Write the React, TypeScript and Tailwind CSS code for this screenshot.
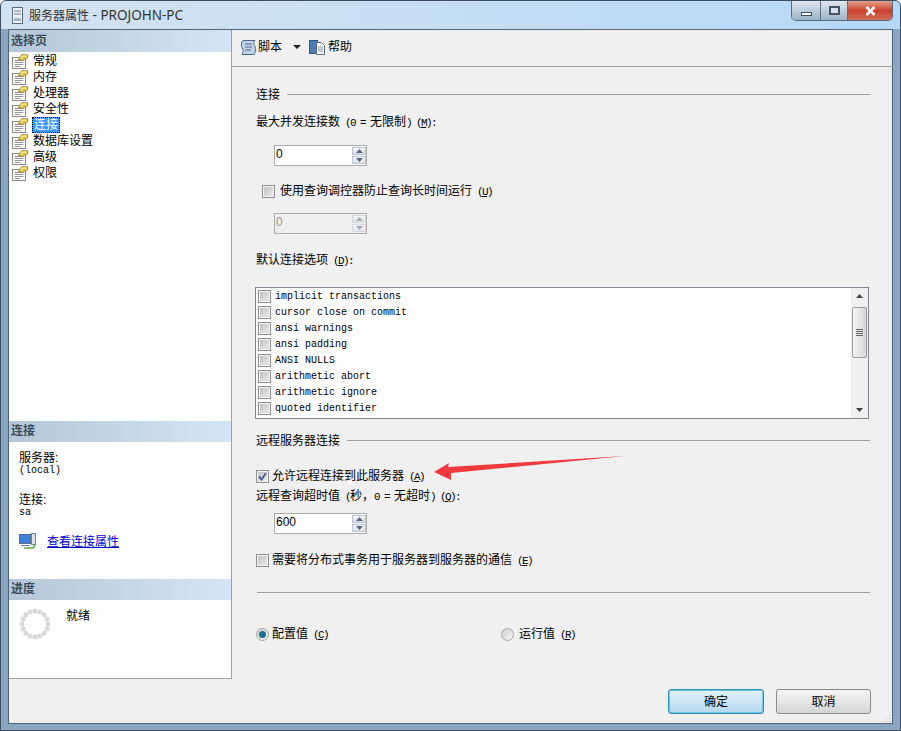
import type { ReactNode } from "react";

const cjk = "font-['Liberation_Sans','Noto_Sans_CJK_SC',sans-serif]";

// half-width latin inside the chinese labels
function L({ children }: { children: ReactNode }) {
  return <span className="whitespace-pre font-['Liberation_Mono',monospace] text-[11px] tracking-[-1.6px]">{children}</span>;
}

function PageIcon() {
  return (
    <svg width="17" height="16" viewBox="0 0 17 16" className="shrink-0">
      <rect x="0.5" y="4.5" width="13" height="11" fill="#fff" stroke="#8a8a8a" />
      <path d="M2.5 7.5h9M2.5 9.5h9M2.5 11.500h9M2.500 13.500h6" stroke="#9a9a9a" />
      <path d="M6 6 10 1.500 16 2 15.500 5 11 7.500Z" fill="#e8cb4e" stroke="#8f7a2a" strokeWidth="0.8" />
      <path d="M8 5 11 3 15 3.200" stroke="#fbf0b0" fill="none" />
    </svg>
  );
}

function SectionHead({ children }: { children: ReactNode }) {
  return (
    <div className="flex h-[21px] items-center bg-gradient-to-r from-[#b4c6d8] to-[#d6e5f3] pb-[2px] pl-[2px] text-[12px] font-bold text-[#3d4b58]">
      {children}
    </div>
  );
}

function Check({ checked }: { checked?: boolean }) {
  return (
    <span className="flex h-[13px] w-[13px] shrink-0 items-center justify-center border border-[#8e8f8f] bg-gradient-to-br from-[#bcbcbc] to-[#efefef] shadow-[inset_0_0_0_1px_#f4f4f4]">
      {checked && (
        <svg width="9" height="9" viewBox="0 0 9 9">
          <path d="M1 4.500 3.500 7.500 8 1" fill="none" stroke="#4a5f97" strokeWidth="2" />
        </svg>
      )}
    </span>
  );
}

function Spinner({ value, disabled }: { value: string; disabled?: boolean }) {
  return (
    <div
      className={`ml-[18px] flex h-[21px] w-[93px] items-center border border-[#ababab] pl-[1px] text-[12px] ${
        disabled ? "bg-[#efefef] text-[#9a9a9a]" : "bg-white text-black"
      }`}
    >
      <span className="mt-[-4px] flex-1">{value}</span>
      <span className={`flex h-[17px] w-[14px] flex-col gap-[1px] ${disabled ? "opacity-50" : ""}`}>
        <span className="flex flex-1 items-center justify-center border border-[#b8c4d0] bg-gradient-to-b from-[#f6f6f6] to-[#d8dee6]">
          <svg width="7" height="4" viewBox="0 0 7 4"><path d="M3.500 0 7 4H0Z" fill="#56697f" /></svg>
        </span>
        <span className="flex flex-1 items-center justify-center border border-[#b8c4d0] bg-gradient-to-b from-[#f6f6f6] to-[#d8dee6]">
          <svg width="7" height="4" viewBox="0 0 7 4"><path d="M0 0H7L3.500 4Z" fill="#56697f" /></svg>
        </span>
      </span>
    </div>
  );
}

function Group({ title, className }: { title: string; className: string }) {
  return (
    <div className={`flex h-4 items-center gap-[7px] text-[12px] ${className}`}>
      <span className="translate-y-px">{title}</span>
      <div className="h-px flex-1 bg-[#a0a0a0]" />
    </div>
  );
}

function Radio({ checked }: { checked?: boolean }) {
  return (
    <span className="flex h-[13px] w-[13px] shrink-0 items-center justify-center rounded-full border border-[#a5a5a5] bg-gradient-to-br from-[#d0d0d0] to-[#f4f4f4]">
      {checked && <span className="h-[7px] w-[7px] rounded-full bg-[#1a6e94]" />}
    </span>
  );
}

const pages = ["常规", "内存", "处理器", "安全性", "连接", "数据库设置", "高级", "权限"];
const options = [
  "implicit transactions",
  "cursor close on commit",
  "ansi warnings",
  "ansi padding",
  "ANSI NULLS",
  "arithmetic abort",
  "arithmetic ignore",
  "quoted identifier",
];

const dots = Array.from({ length: 16 }, (_, i) => (i * Math.PI) / 8);

export default function App() {
  return (
    <div className={`relative flex h-[731px] w-[901px] flex-col overflow-hidden rounded-t-[6px] border border-[#3d4e60] bg-[#8aa7c2] ${cjk} text-black`}>
      {/* title bar */}
      <div className="flex h-[28px] items-start bg-gradient-to-r from-[#d3e2f0] via-[#c6def3] to-[#b4d8f7]">
        <svg width="14" height="18" viewBox="0 0 14 18" className="ml-[10px] mt-[6px]">
          <rect x="1.500" y="0.500" width="10" height="16" fill="#eef2f6" stroke="#5c6c7c" />
          <path d="M3 4h7M3 7h7" stroke="#6d7f90" />
          <rect x="3" y="11" width="7" height="3" fill="#a9b7c4" />
        </svg>
        <span className="ml-[4px] mt-[6px] font-['Noto_Sans','Noto_Sans_CJK_SC',sans-serif] text-[12px] leading-4 text-[#333]">
          服务器属性<span className="text-[13.5px]"> - PROJOHN-PC</span>
        </span>
        <div className="ml-auto mr-[7px] flex h-[20px] w-[102px] overflow-hidden rounded-b-[5px] border border-t-0 border-[#5d6c7c]">
          <div className="flex w-[28px] items-end justify-center bg-gradient-to-b from-[#dfe8f1] to-[#9db1c5] pb-[4px]">
            <span className="h-[4px] w-[11px] border border-[#3f4e5e] bg-white" />
          </div>
          <div className="flex w-[27px] items-center justify-center border-l border-[#5d6c7c] bg-gradient-to-b from-[#dfe8f1] to-[#9db1c5]">
            <span className="h-[9px] w-[11px] border-2 border-[#44525f] bg-[#d6e0ea]" />
          </div>
          <div className="flex flex-1 items-center justify-center border-l border-[#5d6c7c] bg-gradient-to-b from-[#e2a08e] via-[#c8402c] to-[#cf6e5a]">
            <svg width="11" height="10" viewBox="0 0 11 10">
              <path d="M1.500 1 9.500 9M9.500 1 1.500 9" stroke="#fff" strokeWidth="2.600" />
            </svg>
          </div>
        </div>
      </div>

      {/* dialog body */}
      <div className="relative mx-[7px] flex h-[695px] flex-col border border-[#4f6478] bg-[#f0f0f0]">
        <div className="flex h-[649px]">
          {/* left panel */}
          <div className="flex w-[223px] shrink-0 flex-col border-r border-b border-[#a0a0a0] bg-white">
            <div className="h-[391px]">
              <div className="mb-px flex h-[22px] items-center bg-gradient-to-r from-[#b4c6d8] to-[#d6e5f3] pl-[2px] text-[12px] font-bold text-[#3d4b58]">
                选择页
              </div>
              {pages.map((p) => (
                <div key={p} className="flex h-4 items-center pl-[3px] text-[12px]">
                  <PageIcon />
                  {p === "连接" ? (
                    <span className="ml-[3px] border border-dotted border-black bg-[#3399ff] px-px leading-[14px] text-white">{p}</span>
                  ) : (
                    <span className="ml-[4px]">{p}</span>
                  )}
                </div>
              ))}
            </div>
            <div className="h-[158px]">
              <SectionHead>连接</SectionHead>
              <div className="pl-[10px] pt-[8px] text-[12px] leading-3">
                <div className="h-[15px] leading-4">服务器:</div>
                <div className="h-3 font-['Liberation_Mono',monospace] text-[10px]">(local)</div>
                <div className="mt-[15px] h-[15px] leading-4">连接:</div>
                <div className="h-3 font-['Liberation_Mono',monospace] text-[10px]">sa</div>
                <div className="mt-[14px] flex items-center">
                  <svg width="18" height="17" viewBox="0 0 18 17">
                    <rect x="0.500" y="1.500" width="11" height="9" fill="#3f7fe0" stroke="#56708c" />
                    <rect x="12.500" y="0.500" width="4" height="11" fill="#dfe4ea" stroke="#75838f" />
                    <path d="M2 12.500h9" stroke="#75838f" />
                    <path d="M5 15h9l2-3" fill="none" stroke="#5aa84a" strokeWidth="1.500" />
                  </svg>
                  <span className="ml-[10px] leading-4 text-[#0000cc] underline">查看连接属性</span>
                </div>
              </div>
            </div>
            <div className="flex-1">
              <SectionHead>进度</SectionHead>
              <div className="flex items-start pl-[10px] pt-[7px]">
                <svg width="32" height="32" viewBox="-16 -16 32 32" className="mt-[1px]">
                  {dots.map((a) => (
                    <circle key={a} cx={13 * Math.cos(a)} cy={13 * Math.sin(a)} r="2.500" fill="#d9d9d9" />
                  ))}
                </svg>
                <span className="ml-[15px] mt-[1px] text-[12px] leading-4">就绪</span>
              </div>
            </div>
          </div>

          {/* right panel */}
          <div className="flex flex-1 flex-col">
            <div className="flex h-[37px] items-center border-b border-[#a0a0a0] pb-[2px] pl-[8px] text-[12px]">
              <svg width="17" height="17" viewBox="0 0 17 17">
                <path d="M3 1.500h12c-2 2-1 4 0 6s1 5-1 8H2c2-3 1-5 0-7S1 3.500 3 1.500Z" fill="#c3d3e6" stroke="#45688f" />
                <path d="M5 5h7M5 8h7M5 11h6" stroke="#45688f" />
              </svg>
              <span className="ml-[1px]">脚本</span>
              <svg width="8" height="4" viewBox="0 0 8 4" className="ml-[11px]"><path d="M0 0H8L4 4Z" fill="#222" /></svg>
              <svg width="17" height="17" viewBox="0 0 17 17" className="ml-[8px]">
                <rect x="0.500" y="1.500" width="8" height="13" fill="#4d7cb4" stroke="#2f5583" />
                <path d="M7.500 3.500h5l3 3v9h-8Z" fill="#fff" stroke="#596b7d" />
                <path d="M9 8h5M9 10h5M9 12h5" stroke="#8795a3" />
              </svg>
              <span className="ml-[2px]">帮助</span>
            </div>

            <div className="flex flex-col pl-[24px] pr-[23px] text-[12px]">
              <Group title="连接" className="mt-[19px]" />
              <div className="mt-[12px] h-4 leading-4">最大并发连接数<L> (0 = </L>无限制<L>) (<u>M</u>):</L></div>
              <div className="mt-[15px]"><Spinner value="0" /></div>
              <div className="ml-[6px] mt-[17px] flex h-4 items-center gap-[5px] leading-4">
                <Check />
                <span>使用查询调控器防止查询长时间运行<L> (<u>U</u>)</L></span>
              </div>
              <div className="mt-[14px]"><Spinner value="0" disabled /></div>
              <div className="mt-[18px] h-4 leading-4">默认连接选项<L> (<u>D</u>):</L></div>

              <div className="mt-[19px] flex h-[132px] w-[614px] -translate-x-px border border-[#828790] bg-white">
                <div className="flex-1">
                  {options.map((o) => (
                    <div key={o} className="flex h-4 items-center pl-[2px]">
                      <Check />
                      <span className="ml-[4px] font-['Liberation_Mono',monospace] text-[10px]">{o}</span>
                    </div>
                  ))}
                </div>
                <div className="flex w-[17px] flex-col items-center bg-[#f0f0f0]">
                  <svg width="7" height="4" viewBox="0 0 7 4" className="mt-[6px]"><path d="M3.500 0 7 4H0Z" fill="#444" /></svg>
                  <div className="mt-[9px] flex h-[51px] w-[15px] flex-col items-center justify-center gap-px rounded-[2px] border border-[#9b9b9b] bg-gradient-to-r from-[#f4f4f4] to-[#d6d6d6]">
                    <span className="h-px w-[7px] bg-[#666]" />
                    <span className="h-px w-[7px] bg-[#666]" />
                    <span className="h-px w-[7px] bg-[#666]" />
                    <span className="h-px w-[7px] bg-[#666]" />
                  </div>
                  <svg width="7" height="4" viewBox="0 0 7 4" className="mb-[6px] mt-auto"><path d="M0 0H7L3.500 4Z" fill="#444" /></svg>
                </div>
              </div>

              <Group title="远程服务器连接" className="mt-[13px]" />
              <div className="mt-[20px] flex h-4 items-center gap-[3px] leading-4">
                <Check checked />
                <span>允许远程连接到此服务器<L> (<u>A</u>)</L></span>
              </div>
              <div className="mt-[4px] h-4 leading-4">远程查询超时值<L> (</L>秒，<L>0 = </L>无超时<L>) (<u>Q</u>):</L></div>
              <div className="mt-[9px]"><Spinner value="600" /></div>
              <div className="mt-[18px] flex h-4 items-center gap-[3px] leading-4">
                <Check />
                <span>需要将分布式事务用于服务器到服务器的通信<L> (<u>E</u>)</L></span>
              </div>
              <div className="ml-px mt-[24px] h-px bg-[#a0a0a0]" />
              <div className="mt-[33px] flex h-4 items-center leading-4">
                <Radio checked />
                <span className="ml-[3px] w-[229px]">配置值<L> (<u>C</u>)</L></span>
                <Radio />
                <span className="ml-[5px]">运行值<L> (<u>R</u>)</L></span>
              </div>
            </div>
          </div>
        </div>

        {/* footer */}
        <div className="flex flex-1 items-start justify-end gap-[12px] pr-[21px] pt-[10px] text-[12px]">
          <button className="h-[25px] w-[96px] rounded-[3px] border border-[#2c8fb8] bg-gradient-to-b from-[#e3f2fb] to-[#b4d9ee] shadow-[inset_0_0_0_1px_#6cc4e4]">确定</button>
          <button className="h-[25px] w-[95px] rounded-[3px] border border-[#8a8a8a] bg-gradient-to-b from-[#f6f6f6] to-[#d4d4d4]">取消</button>
        </div>

        {/* resize grip */}
        <svg width="8" height="8" viewBox="0 0 8 8" className="absolute bottom-[1px] right-[1px]">
          <path d="M6 1h1v1H6ZM3 4h1v1H3ZM6 4h1v1H6ZM0 7h1v1H0ZM3 7h1v1H3ZM6 7h1v1H6Z" fill="#b5b5b5" />
        </svg>
      </div>

      {/* red annotation arrow */}
      <svg width="901" height="731" className="pointer-events-none absolute left-[-1px] top-[-1px]">
        <path d="M434 472 449 463 448 467 625 456 451 473 451 480Z" fill="#f0393c" />
      </svg>
    </div>
  );
}
